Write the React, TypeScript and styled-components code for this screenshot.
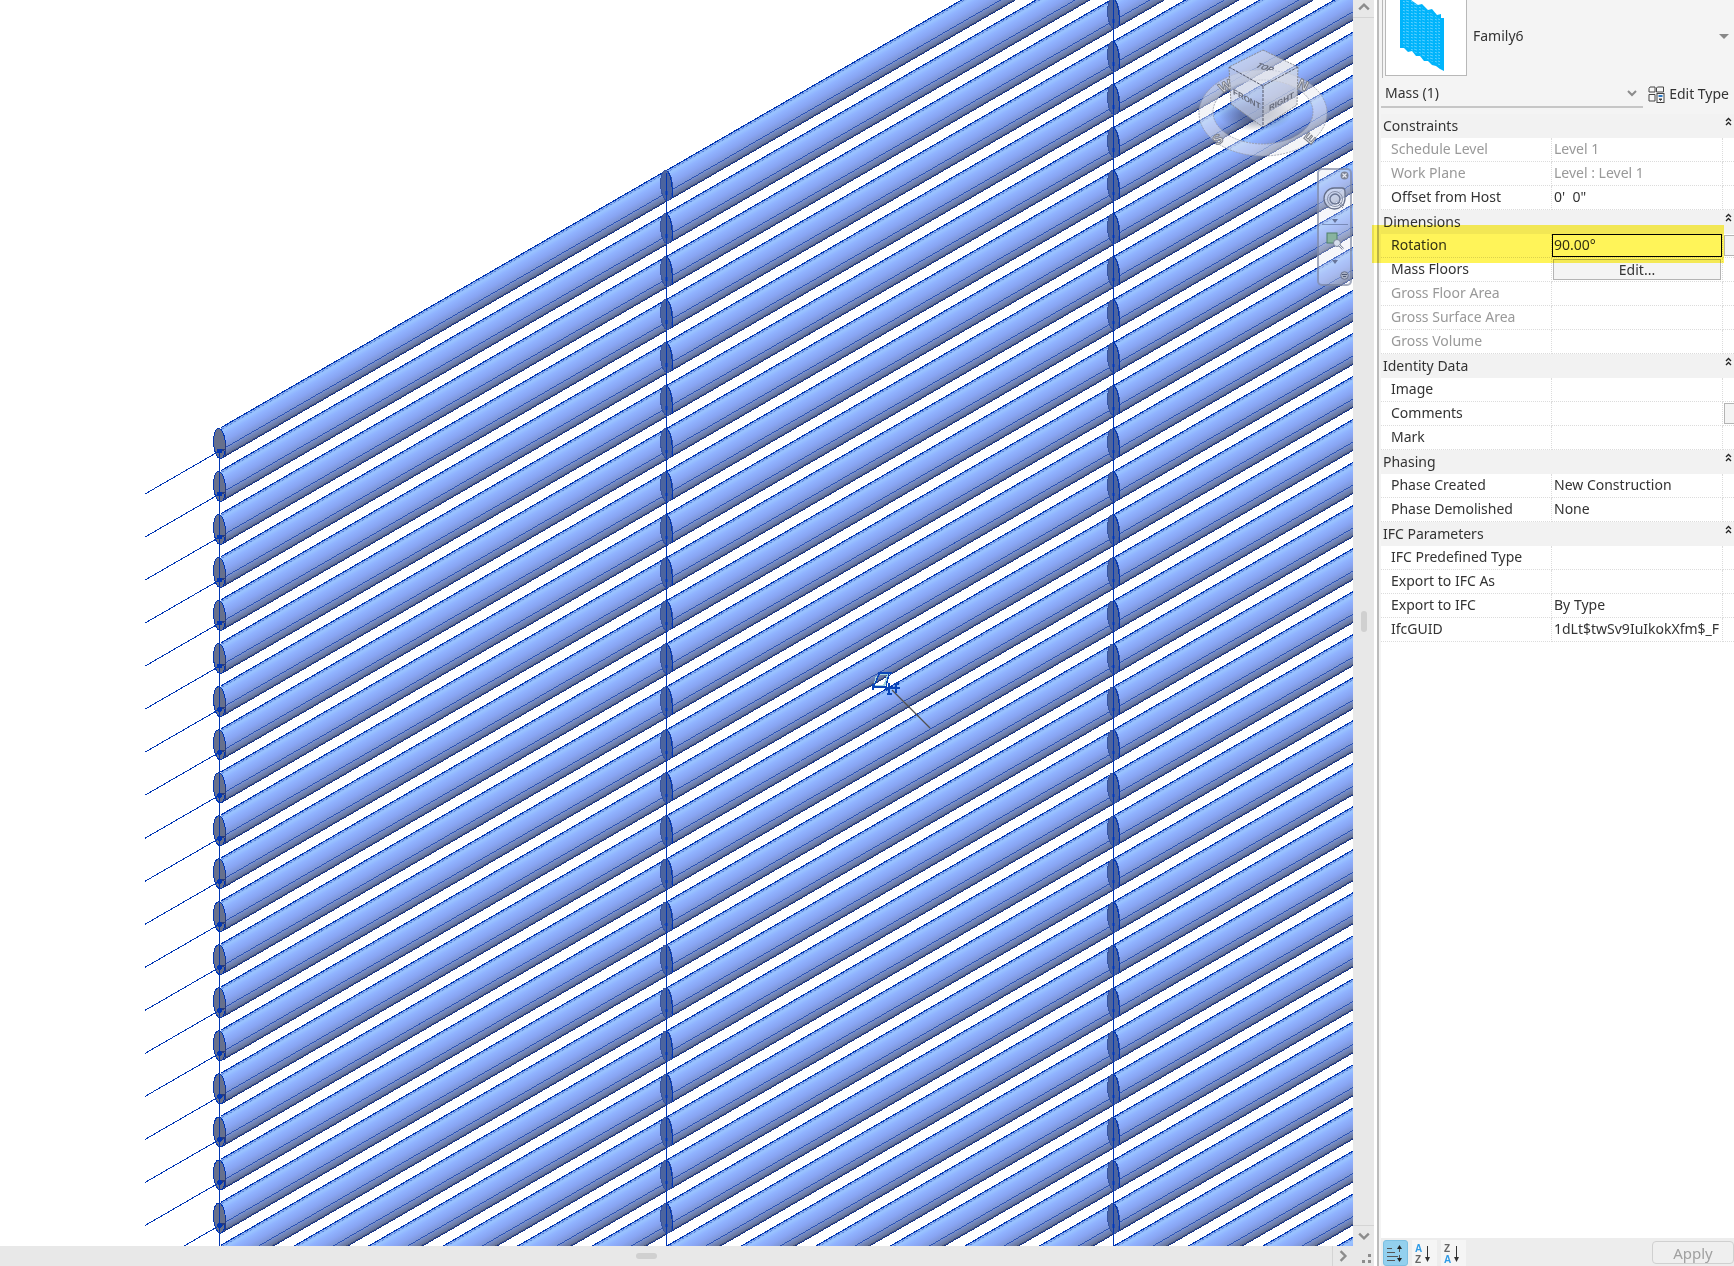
import React from "react";
import styled, { createGlobalStyle, css } from "styled-components";

const Global = createGlobalStyle`
  * { box-sizing: border-box; }
  body { margin: 0; background: #fff; }
  button, input, select { font: inherit; color: inherit; margin: 0; }
`;

const PITCH = 43.03;
const BAY = 447;
const RISE = 258;
const ORIGIN = { x: 219.5, y: 451 };
const INK = "#0036b4";

const Window = styled.div`
  display: flex;
  height: 100vh;
  overflow: hidden;
  background: #fff;
  color: #333;
  font-family: "Noto Sans", "Open Sans", sans-serif;
  font-size: 14px;
  line-height: 20px;
`;

const Workspace = styled.main`
  flex: 1;
  min-width: 0;
  display: grid;
  grid-template-columns: minmax(0, 1fr) 21px;
  grid-template-rows: minmax(0, 1fr) 20px;
`;

const Canvas = styled.section`
  position: relative;
  overflow: hidden;
  background: #fff;
`;

const Drawing = styled.svg`
  display: block;
  width: 100%;
  height: 100%;
`;

const CubeOverlay = styled.svg`
  position: absolute;
  top: 45px;
  right: 22px;
  width: 136px;
  height: 115px;
  font-family: "Liberation Sans", sans-serif;
`;

const NavBar = styled.nav`
  position: absolute;
  top: 168px;
  right: 1px;
  width: 35px;
  height: 118px;
  display: flex;
  flex-direction: column;
  align-items: center;
  border: 2px solid rgba(110, 120, 150, 0.6);
  border-radius: 5px;
  background: rgba(225, 230, 242, 0.35);
`;

const NavButton = styled.button<{ $h: number; $end?: boolean }>`
  display: flex;
  align-items: center;
  justify-content: center;
  align-self: ${(p) => (p.$end ? "flex-end" : "center")};
  height: ${(p) => p.$h}px;
  padding: 0 ${(p) => (p.$end ? 1 : 2)}px;
  border: 0;
  background: none;
`;

const NavRule = styled.div`
  width: 26px;
  height: 1px;
  background: rgba(90, 105, 145, 0.6);
`;

const ScrollColumn = styled.div`
  display: flex;
  flex-direction: column;
  justify-content: space-between;
  align-items: center;
  background: #e8e8e8;
`;

const ScrollRow = styled.div`
  display: flex;
  align-items: center;
  background: #e8e8e8;
`;

const ScrollTrack = styled.div`
  flex: 1;
  padding-left: 47%;
`;

const ScrollButton = styled.button<{ $edge: "top" | "bottom" | "right" }>`
  display: flex;
  align-items: center;
  justify-content: center;
  padding: 0;
  background: #e8e8e8;
  border: 0 solid #d4d4d4;
  width: 21px;
  height: 20px;
  ${(p) => p.$edge === "top" && css`height: 18px; border-bottom-width: 1px; padding-bottom: 4px;`}
  ${(p) => p.$edge === "bottom" && css`height: 21px; border-top-width: 1px;`}
  ${(p) => p.$edge === "right" && css`border-left-width: 1px;`}
`;

const ScrollHandle = styled.div<{ $vertical?: boolean }>`
  width: ${(p) => (p.$vertical ? 6 : 21)}px;
  height: ${(p) => (p.$vertical ? 21 : 6)}px;
  border-radius: 3px;
  background: #d0d0d0;
`;

const Corner = styled.div`
  display: flex;
  align-items: flex-end;
  justify-content: flex-end;
  padding: 3px;
  background: #e8e8e8;
`;

const Panel = styled.aside`
  width: 357px;
  display: flex;
  flex-direction: column;
  margin-left: 3px;
  border-left: 2px solid #bbb;
  padding-left: 2px;
  background: #f4f4f4;
`;

const TypeHeader = styled.header`
  display: flex;
  align-items: center;
  height: 78px;
  margin-left: 1px;
  padding: 0 5px 2px 2px;
  border-left: 1px solid #b8b8b8;
`;

const Thumb = styled.div`
  width: 82px;
  height: 76px;
  border: 1px solid #b8b8b8;
  border-top: 0;
  background: #fff;
`;

const SelectBox = styled.div<{ $underline?: boolean }>`
  flex: 1;
  display: flex;
  align-items: center;
  margin-left: ${(p) => (p.$underline ? 0 : 6)}px;
  margin-bottom: ${(p) => (p.$underline ? 0 : 4)}px;
  height: ${(p) => (p.$underline ? 28 : 32)}px;
  padding: 0 ${(p) => (p.$underline ? 6 : 0)}px 0 ${(p) => (p.$underline ? 4 : 0)}px;
  border-bottom: ${(p) => (p.$underline ? "2px solid #c6c6c6" : "0")};
`;

const Select = styled.select`
  flex: 1;
  min-width: 0;
  padding: 0;
  border: 0;
  appearance: none;
  background: transparent;
`;

const FilterRow = styled.div`
  display: flex;
  align-items: center;
  height: 36px;
  padding-bottom: 4px;
`;

const EditType = styled.button`
  display: flex;
  align-items: center;
  gap: 4px;
  padding: 0 5px;
  border: 0;
  background: none;
  white-space: nowrap;
`;

const GridArea = styled.div`
  position: relative;
  flex: 1;
  background: #fff;
`;

const Table = styled.table`
  width: 100%;
  table-layout: fixed;
  border-collapse: separate;
  border-spacing: 0;
`;

const GroupCell = styled.th`
  height: 24px;
  padding: 0 0 0 2px;
  background: #f2f2f2;
  text-align: left;
  font-weight: 400;
`;

const GroupLine = styled.div`
  display: flex;
  justify-content: space-between;
  height: 24px;
  padding-top: 2px;
`;

const Collapse = styled.button`
  display: flex;
  width: 11px;
  height: 16px;
  padding: 1px 0 0 2px;
  border: 0;
  background: none;
`;

const Cell = styled.td<{ $muted?: boolean; $name?: boolean }>`
  height: 24px;
  padding: 0 0 ${(p) => (p.$name ? 2 : 0)}px ${(p) => (p.$name ? 10 : 0)}px;
  border-bottom: 1px dotted #dcdcdc;
  border-right: 1px dotted #dcdcdc;
  color: ${(p) => (p.$muted ? "#999" : "#333")};
  white-space: nowrap;
  &:last-child { border-right: 0; padding-left: 1px; }
`;

const ValueInput = styled.input<{ $active?: boolean }>`
  display: block;
  width: 100%;
  height: 23px;
  padding: 0 0 3px 1px;
  border: 1px solid ${(p) => (p.$active ? "#000" : "transparent")};
  background: transparent;
  outline: 0;
  &:disabled { color: #999; }
`;

const EditButton = styled.button`
  display: block;
  width: calc(100% - 2px);
  height: 21px;
  margin: 0 1px;
  padding: 0;
  border: 1px solid #b4b4b4;
  background: #f4f4f4;
  line-height: 18px;
`;

const SideButton = styled.button`
  display: block;
  width: 22px;
  height: 21px;
  padding: 0;
  border: 1px solid #b4b4b4;
  background: #f4f4f4;
`;

const Marker = styled.div`
  position: absolute;
  left: -9px;
  right: 10px;
  top: 111px;
  height: 38px;
  background: #fff459;
  mix-blend-mode: multiply;
  pointer-events: none;
`;

const Footer = styled.footer`
  display: flex;
  align-items: flex-start;
  height: 28px;
  padding: 2px 0 0 2px;
  gap: 4px;
  background: #ededed;
`;

const SortButton = styled.button<{ $on?: boolean }>`
  display: flex;
  align-items: center;
  width: 25px;
  height: 26px;
  padding: 0 0 0 3px;
  border: ${(p) => (p.$on ? "1px solid #7cc0e2" : "0")};
  border-radius: ${(p) => (p.$on ? 3 : 0)}px;
  background: ${(p) => (p.$on ? "#93d0ee" : "#f5f5f5")};
`;

const Apply = styled.button`
  width: 82px;
  height: 23px;
  margin: 1px 0 0 auto;
  padding: 0;
  border: 1px solid #d0d0d0;
  border-radius: 4px;
  background: #efefef;
  font-size: 15px;
  &:disabled { color: #a0a0a0; }
`;

function Chevron({ dir, size = 10 }: { dir: "up" | "down" | "right"; size?: number }) {
  const d = { up: "M1 7 L5 3 L9 7", down: "M1 3 L5 7 L9 3", right: "M3 1 L7 5 L3 9" }[dir];
  return (
    <svg width={size} height={size} viewBox="0 0 10 10" fill="none" stroke="#8c8c8c" strokeWidth="2">
      <path d={d} />
    </svg>
  );
}

function Louvers() {
  const tubes = Array.from({ length: 40 }, (_, i) => i);
  const joints = Array.from({ length: 62 }, (_, i) => i);
  return (
    <Drawing aria-label="Mass model" shapeRendering="crispEdges">
      <defs>
        <linearGradient id="tube" x1="0" y1="0" x2="0" y2="1">
          <stop offset="0" stopColor="#7c9fe8" />
          <stop offset=".13" stopColor="#9ac4ff" />
          <stop offset=".27" stopColor="#90b3ff" />
          <stop offset=".5" stopColor="#88a4f2" />
          <stop offset=".72" stopColor="#7c94d2" />
          <stop offset="1" stopColor="#606b8a" />
        </linearGradient>
      </defs>
      {tubes.map((k) => (
        <g key={k} transform={`translate(${ORIGIN.x} ${ORIGIN.y + k * PITCH}) skewY(-30)`}>
          <rect x="1" y="-22.5" width="2600" height="31" fill="url(#tube)" />
          <path d="M1 -22.5H2600" stroke={INK} strokeWidth="1.3" />
          <path d="M2 -20.5H2600" stroke={INK} strokeWidth="1" strokeDasharray="2 2" opacity=".35" />
          <path d="M3 7.5H2600" stroke="#35456f" strokeWidth="1" opacity=".6" />
          <path d="M3 8.5H2600" stroke="#12318c" strokeWidth="1" />
          <path d="M0 0H2600" stroke="#2b54b8" strokeWidth="1" />
        </g>
      ))}
      {[1, 2, 3].map((j) => {
        const x = ORIGIN.x + j * BAY;
        const y0 = ORIGIN.y - j * RISE;
        return (
          <g key={j}>
            {joints.map((k) => {
              const y = y0 + k * PITCH;
              return (
                <g key={k}>
                  <ellipse cx={x} cy={y - 7.5} rx="6" ry="15" transform={`rotate(-4 ${x} ${y - 7.5})`} fill="#4c649f" stroke="#3553a2" />
                  <path d={`M${x + 1} ${y - 22}C${x + 5} ${y - 17} ${x + 6} ${y - 8} ${x + 6} ${y + 5}`} fill="none" stroke={INK} />
                  <circle cx={x} cy={y} r="2" fill="#2450b8" />
                </g>
              );
            })}
            <path d={`M${x} ${y0 - 20}V3000`} stroke={INK} />
          </g>
        );
      })}
      {tubes.map((k) => {
        const { x } = ORIGIN;
        const y = ORIGIN.y + k * PITCH;
        return (
          <g key={k}>
            <ellipse cx={x} cy={y - 7.5} rx="6" ry="15" transform={`rotate(-4 ${x} ${y - 7.5})`} fill="#67708c" stroke={INK} />
            <path d={`M${x} ${y + 1}L${x + 6} ${y - 2}M${x + 1} ${y - 2}H${x + 5}M${x + 6} ${y - 8}V${y + 5}`} stroke="#253a80" />
            <circle cx={x} cy={y} r="2.5" fill={INK} />
            <path d={`M${x} ${y}L${x - 74.5} ${y + 43}`} stroke={INK} />
          </g>
        );
      })}
      <path d={`M${ORIGIN.x} ${ORIGIN.y}V3000`} stroke={INK} />
      <path d="M892 690L930 728" stroke="#505050" shapeRendering="auto" strokeWidth="1.3" />
      <path d="M880 674H890M877 676L874 686H884L888 675" fill="none" stroke="#a5d5dc" strokeWidth="2" />
      <path d="M878 673H892M880 672L874 686M872 687H886L889 673M873 684V690M885 688H900M889 683V694M887 694H892M896 683V693M894 684H899M886 690L893 687" fill="none" stroke="#0a45b8" strokeWidth="1.4" />
    </Drawing>
  );
}

function ViewCube() {
  return (
    <CubeOverlay viewBox="0 0 136 115" role="img" aria-label="View cube">
      <defs>
        <radialGradient id="shade"><stop offset=".4" stopColor="#38466c" stopOpacity=".45" /><stop offset="1" stopColor="#38466c" stopOpacity="0" /></radialGradient>
      </defs>
      <path fillRule="evenodd" d="M4 68a64 43 0 1 0 128 0a64 43 0 1 0 -128 0ZM18 67a50 32 0 1 0 100 0a50 32 0 1 0 -100 0Z" fill="#e8eaf0" fillOpacity=".5" stroke="#9296a4" strokeDasharray="2 1" strokeWidth=".8" />
      <ellipse cx="60" cy="69" rx="37" ry="17" fill="url(#shade)" />
      <g fontSize="14" fontWeight="700" fill="#dcdde2" stroke="#777b86" strokeWidth=".9">
        <text x="23" y="46" transform="rotate(-28 30 40)">W</text>
        <text x="103" y="45" transform="rotate(25 109 40)">N</text>
        <text x="18" y="99" transform="rotate(-35 23 94)">S</text>
        <text x="110" y="98" transform="rotate(-50 115 93)">E</text>
      </g>
      <path d="M68 5L103 22L68 41L34 22Z" fill="#d6dbe8" fillOpacity=".66" />
      <path d="M34 22L68 41V82L36 59Z" fill="#c5cee5" fillOpacity=".68" />
      <path d="M103 22L68 41V82L102 60Z" fill="#d8dae0" fillOpacity=".72" />
      <path d="M68 5L103 22L102 60L68 82L36 59L34 22Z" fill="none" stroke="#85888f" strokeDasharray="2 1" />
      <path d="M34 22L68 41L103 22M68 41V82" fill="none" stroke="#55596a" strokeDasharray="3 1" />
      <g fontSize="8" fontWeight="700" fill="#636878">
        <text transform="translate(38 49) skewY(29)">FRONT</text>
        <text transform="translate(74 66) skewY(-29)">RIGHT</text>
        <text transform="translate(60 22) rotate(18) skewX(-30)">TOP</text>
      </g>
    </CubeOverlay>
  );
}

function DropMark() {
  return <svg width="6" height="4"><path d="M0 0H6L3 4Z" fill="#66749a" /></svg>;
}

function NavigationBar() {
  return (
    <NavBar aria-label="Navigation bar">
      <NavButton $h={10} $end aria-label="Close">
        <svg width="9" height="9"><circle cx="4.5" cy="4.5" r="4" fill="#7d8498" /><path d="M2.5 2.5L6.5 6.5M6.5 2.5L2.5 6.5" stroke="#e8ebf3" strokeWidth="1.2" /></svg>
      </NavButton>
      <NavButton $h={38} aria-label="Steering wheel">
        <svg width="24" height="24" fill="none"><path d="M11 1H19Q22 1 22 5V12A10.5 10.5 0 1 1 11 1Z" fill="#dfe5f3" fillOpacity=".65" stroke="#66708a" strokeWidth="1.3" /><circle cx="12" cy="12" r="7.5" stroke="#8891aa" /><circle cx="12" cy="12" r="5" stroke="#68738f" strokeWidth="1.3" /><path d="M15 16L20 21M16 15L21 19" stroke="#7a849d" /></svg>
      </NavButton>
      <NavButton $h={6} aria-label="Wheel options"><DropMark /></NavButton>
      <NavRule />
      <NavButton $h={32} aria-label="Zoom in region">
        <svg width="18" height="18"><rect x="1" y="1" width="10" height="10" fill="#88b39f" stroke="#4e7f68" /><circle cx="11" cy="11" r="3.5" fill="#d6deed" stroke="#79839a" /><path d="M13 13L17 17" stroke="#79839a" strokeWidth="2.4" /><path d="M13 13L17 17" stroke="#eceef4" /></svg>
      </NavButton>
      <NavButton $h={10} aria-label="Zoom options"><DropMark /></NavButton>
      <NavButton $h={16} $end aria-label="Customize">
        <svg width="9" height="9"><circle cx="4.5" cy="4.5" r="3.8" fill="#aab2c6" stroke="#6b748e" /><path d="M2 3.5H7M3 5.5H6" stroke="#4d5874" /></svg>
      </NavButton>
    </NavBar>
  );
}

function FamilyPreview() {
  return (
    <svg width="80" height="75" aria-label="Family preview">
      <defs>
        <pattern id="weave" width="4" height="3" patternUnits="userSpaceOnUse"><path d="M0 1L3 2" stroke="#58cfff" strokeWidth="1" /></pattern>
      </defs>
      <path d="M14 0H25L32 5L36 4L42 10L46 9L51 15L55 14L55 18H58V71L54 69L50 66L46 65L42 61L38 61L34 56L30 56L26 51L22 52L18 48L14 48Z" fill="#00b4fb" />
      <path d="M17 0H25L54 19V66L17 46Z" fill="url(#weave)" />
      <path d="M24 0V50M32 6V55M40 10V60M48 13V65" stroke="#00b4fb" strokeWidth="2" />
    </svg>
  );
}

type Prop = { name: string; value?: string; muted?: boolean; kind?: "edit" | "active"; side?: boolean };
const groups: { title: string; props: Prop[] }[] = [
  { title: "Constraints", props: [
    { name: "Schedule Level", value: "Level 1", muted: true },
    { name: "Work Plane", value: "Level : Level 1", muted: true },
    { name: "Offset from Host", value: "0'  0\"" },
  ] },
  { title: "Dimensions", props: [
    { name: "Rotation", value: "90.00°", kind: "active", side: true },
    { name: "Mass Floors", value: "Edit...", kind: "edit" },
    { name: "Gross Floor Area", muted: true },
    { name: "Gross Surface Area", muted: true },
    { name: "Gross Volume", muted: true },
  ] },
  { title: "Identity Data", props: [{ name: "Image" }, { name: "Comments", side: true }, { name: "Mark" }] },
  { title: "Phasing", props: [
    { name: "Phase Created", value: "New Construction" },
    { name: "Phase Demolished", value: "None" },
  ] },
  { title: "IFC Parameters", props: [
    { name: "IFC Predefined Type" },
    { name: "Export to IFC As" },
    { name: "Export to IFC", value: "By Type" },
    { name: "IfcGUID", value: "1dLt$twSv9IuIkokXfm$_F" },
  ] },
];

function PropertyRow({ prop }: { prop: Prop }) {
  const id = prop.name.replace(/\s+/g, "-").toLowerCase();
  return (
    <tr>
      <Cell $name $muted={prop.muted}><label htmlFor={id}>{prop.name}</label></Cell>
      <Cell $muted={prop.muted}>
        {prop.kind === "edit"
          ? <EditButton id={id}>{prop.value}</EditButton>
          : <ValueInput id={id} defaultValue={prop.value ?? ""} disabled={prop.muted} $active={prop.kind === "active"} />}
      </Cell>
      <Cell>{prop.side && <SideButton aria-label={`Associate ${prop.name}`} />}</Cell>
    </tr>
  );
}

function SortIcon({ top, bottom }: { top: string; bottom: string }) {
  const tone = (s: string) => (s === "A" ? "#2f9be6" : "#666");
  return (
    <svg width="18" height="25" fontFamily="Liberation Sans, sans-serif" fontSize="10" fontWeight="700">
      <text x="0" y="11" fill={tone(top)}>{top}</text>
      <text x="0" y="22" fill={tone(bottom)}>{bottom}</text>
      <path d="M12.5 5V18" stroke="#333" /><path d="M10 16H15L12.5 21Z" fill="#333" />
    </svg>
  );
}

export default function App() {
  return (
    <>
      <Global />
      <Window>
        <Workspace>
          <Canvas>
            <Louvers />
            <ViewCube />
            <NavigationBar />
          </Canvas>
          <ScrollColumn>
            <ScrollButton $edge="top" aria-label="Scroll up"><Chevron dir="up" size={12} /></ScrollButton>
            <ScrollHandle $vertical />
            <ScrollButton $edge="bottom" aria-label="Scroll down"><Chevron dir="down" size={12} /></ScrollButton>
          </ScrollColumn>
          <ScrollRow>
            <ScrollTrack><ScrollHandle /></ScrollTrack>
            <ScrollButton $edge="right" aria-label="Scroll right"><Chevron dir="right" size={12} /></ScrollButton>
          </ScrollRow>
          <Corner>
            <svg width="9" height="9" fill="#8c8c8c"><path d="M6 0H9V3H6ZM0 6H3V9H0ZM6 6H9V9H6Z" /></svg>
          </Corner>
        </Workspace>
        <Panel>
          <TypeHeader>
            <Thumb><FamilyPreview /></Thumb>
            <SelectBox>
              <Select aria-label="Type"><option>Family6</option></Select>
              <svg width="10" height="5"><path d="M0 0H10L5 5Z" fill="#888" /></svg>
            </SelectBox>
          </TypeHeader>
          <FilterRow>
            <SelectBox $underline>
              <Select aria-label="Filter"><option>Mass (1)</option></Select>
              <Chevron dir="down" />
            </SelectBox>
            <EditType>
              <svg width="17" height="17" viewBox="0 0 17 17" fill="#f7f7f7" stroke="#444">
                <path d="M2 1H7V6H1V2.5ZM9.5 1H15.5V6H8.5V2ZM1 8.5H7V15H1Z" />
                <rect x="9" y="7.5" width="7" height="9" /><rect x="11" y="9.5" width="3" height="1" stroke="#2878c8" />
                <path d="M11 13H14L12.5 14.5Z" fill="#333" />
              </svg>
              Edit Type
            </EditType>
          </FilterRow>
          <GridArea>
            <Table>
              <colgroup><col width="171" /><col /><col width="11" /></colgroup>
              {groups.map((g) => (
                <tbody key={g.title}>
                  <tr>
                    <GroupCell colSpan={3}>
                      <GroupLine>
                        {g.title}
                        <Collapse aria-label={`Collapse ${g.title}`}>
                          <svg width="7" height="9" fill="none" stroke="#222" strokeWidth="1.3"><path d="M1 4L3.5 1.5L6 4M1 8L3.5 5.5L6 8" /></svg>
                        </Collapse>
                      </GroupLine>
                    </GroupCell>
                  </tr>
                  {g.props.map((p) => <PropertyRow key={p.name} prop={p} />)}
                </tbody>
              ))}
            </Table>
            <Marker />
          </GridArea>
          <Footer>
            <SortButton $on aria-label="Default order">
              <svg width="17" height="18" stroke="#555"><path d="M0 4.5H5M0 8.5H8M0 12.5H11M0 16.5H8M12.5 3V8M12.5 11V16" /><path d="M10 5H15L12.5 1ZM10 14H15L12.5 18Z" fill="#222" stroke="none" /></svg>
            </SortButton>
            <SortButton aria-label="Sort ascending"><SortIcon top="A" bottom="Z" /></SortButton>
            <SortButton aria-label="Sort descending"><SortIcon top="Z" bottom="A" /></SortButton>
            <Apply disabled>Apply</Apply>
          </Footer>
        </Panel>
      </Window>
    </>
  );
}
